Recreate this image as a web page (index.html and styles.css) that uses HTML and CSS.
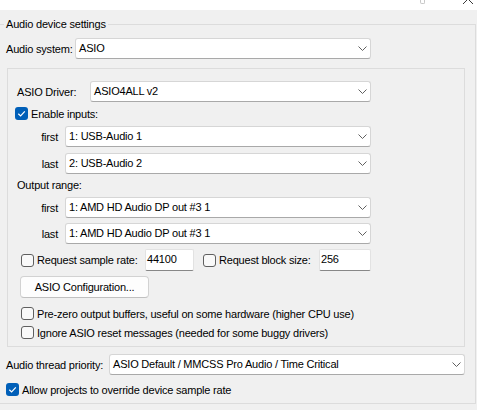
FILE: index.html
```html
<!DOCTYPE html>
<html>
<head>
<meta charset="utf-8">
<link rel="stylesheet" href="styles.css">
</head>
<body>
<div class="titlebar">
  <span class="tb-restore"></span>
  <svg class="tb-close" width="12" height="4" viewBox="0 0 12 4"><path d="M0.5 4.5 L6 -1 M11.5 4.5 L6 -1" stroke="#3a3a3a" fill="none" stroke-width="1"/></svg>
</div>
<div class="group outer">
  <div class="legend"><span>Audio device settings</span></div>
  <div class="row r-combo r-system">
    <span class="lbl lbl-system">Audio system:</span>
    <div class="combo w-system"><span>ASIO</span><svg class="chev" width="9" height="5" viewBox="0 0 9 5"><path d="M0.5 0.5 L4.5 4.5 L8.5 0.5" stroke="#606060" fill="none"/></svg></div>
  </div>
  <div class="group inner">
    <div class="row r-combo r-driver">
      <span class="lbl lbl-driver">ASIO Driver:</span>
      <div class="combo w-driver"><span>ASIO4ALL v2</span><svg class="chev" width="9" height="5" viewBox="0 0 9 5"><path d="M0.5 0.5 L4.5 4.5 L8.5 0.5" stroke="#606060" fill="none"/></svg></div>
    </div>
    <div class="row r-check r-enable">
      <span class="chk on"><svg width="13" height="13" viewBox="0 0 13 13"><path d="M3.3 6.8 L5.6 9 L9.8 4.3" stroke="#fff" fill="none" stroke-width="1.2"/></svg></span>
      <span>Enable inputs:</span>
    </div>
    <div class="row r-combo r-first">
      <span class="lbl lbl-io">first</span>
      <div class="combo w-io"><span>1: USB-Audio 1</span><svg class="chev" width="9" height="5" viewBox="0 0 9 5"><path d="M0.5 0.5 L4.5 4.5 L8.5 0.5" stroke="#606060" fill="none"/></svg></div>
    </div>
    <div class="row r-combo r-last">
      <span class="lbl lbl-io">last</span>
      <div class="combo w-io"><span>2: USB-Audio 2</span><svg class="chev" width="9" height="5" viewBox="0 0 9 5"><path d="M0.5 0.5 L4.5 4.5 L8.5 0.5" stroke="#606060" fill="none"/></svg></div>
    </div>
    <div class="row r-outhead">Output range:</div>
    <div class="row r-combo r-ofirst">
      <span class="lbl lbl-io">first</span>
      <div class="combo w-io"><span>1: AMD HD Audio DP out #3 1</span><svg class="chev" width="9" height="5" viewBox="0 0 9 5"><path d="M0.5 0.5 L4.5 4.5 L8.5 0.5" stroke="#606060" fill="none"/></svg></div>
    </div>
    <div class="row r-combo r-olast">
      <span class="lbl lbl-io">last</span>
      <div class="combo w-io"><span>1: AMD HD Audio DP out #3 1</span><svg class="chev" width="9" height="5" viewBox="0 0 9 5"><path d="M0.5 0.5 L4.5 4.5 L8.5 0.5" stroke="#606060" fill="none"/></svg></div>
    </div>
    <div class="row r-request">
      <div class="grp grp-rate"><span class="chk off"></span><span>Request sample rate:</span></div>
      <div class="tinput w-rate">44100</div>
      <div class="grp grp-block"><span class="chk off"></span><span>Request block size:</span></div>
      <div class="tinput w-block">256</div>
    </div>
    <div class="btn">ASIO Configuration...</div>
    <div class="row r-check r-prezero">
      <span class="chk off"></span>
      <span>Pre-zero output buffers, useful on some hardware (higher CPU use)</span>
    </div>
    <div class="row r-check r-ignore">
      <span class="chk off"></span>
      <span>Ignore ASIO reset messages (needed for some buggy drivers)</span>
    </div>
  </div>
  <div class="row r-combo r-thread">
    <span class="lbl lbl-thread">Audio thread priority:</span>
    <div class="combo w-thread"><span>ASIO Default / MMCSS Pro Audio / Time Critical</span><svg class="chev" width="9" height="5" viewBox="0 0 9 5"><path d="M0.5 0.5 L4.5 4.5 L8.5 0.5" stroke="#606060" fill="none"/></svg></div>
  </div>
  <div class="row r-check r-allow">
    <span class="chk on"><svg width="13" height="13" viewBox="0 0 13 13"><path d="M3.3 6.8 L5.6 9 L9.8 4.3" stroke="#fff" fill="none" stroke-width="1.2"/></svg></span>
    <span>Allow projects to override device sample rate</span>
  </div>
</div>
</body>
</html>
```
FILE: styles.css
```css
html, body {
  margin: 0;
  padding: 0;
}
body {
  background: #f0f0f0;
  font-family: "Liberation Sans", Arial, sans-serif;
  font-size: 11px;
  letter-spacing: -0.2px;
  color: #000;
  width: 477px;
  height: 410px;
  overflow: hidden;
}
.titlebar {
  height: 10px;
  background: #fff;
  display: flex;
  justify-content: flex-end;
  align-items: flex-start;
  padding-right: 3px;
}
.tb-restore {
  width: 5px;
  height: 4px;
  box-sizing: border-box;
  border: 1px solid #c8c8c8;
  border-top: 0;
  border-radius: 0 0 2px 2px;
  margin-right: 37px;
}
.tb-close {
  display: block;
}
.group {
  border: 1px solid #dcdcdc;
  box-sizing: border-box;
}
.outer {
  margin: 14px 0 0 -1px;
  width: 477px;
  height: 380px;
  padding-left: 6px;
}
.legend {
  height: 0;
  display: flex;
  align-items: flex-start;
}
.legend span {
  margin-top: -8px;
  margin-left: -2px;
  height: 15px;
  line-height: 15px;
  padding: 0 2px;
  background: #f0f0f0;
}
.row {
  display: flex;
  align-items: center;
}
.r-combo {
  height: 21px;
}
.lbl {
  flex: none;
  white-space: nowrap;
}
.combo {
  height: 21px;
  box-sizing: border-box;
  background: #fff;
  border: 1px solid #d6d6d6;
  border-bottom-color: #a9a9a9;
  border-radius: 3px;
  display: flex;
  align-items: center;
  justify-content: space-between;
  padding: 0 3px 1px 3px;
  white-space: nowrap;
}
.chev {
  display: block;
  flex: none;
  margin-top: 1px;
}
.r-system { margin-top: 13px; }
.lbl-system { width: 69px; }
.w-system { width: 296px; }

.inner {
  margin: 9px 0 0 1px;
  width: 458px;
  height: 279px;
  padding-left: 9px;
}
.r-driver { margin-top: 12px; }
.lbl-driver { width: 73px; }
.w-driver { width: 281px; }

.r-check {
  height: 13px;
  white-space: nowrap;
}
.chk {
  flex: none;
  width: 13px;
  height: 13px;
  box-sizing: border-box;
  border-radius: 3px;
  margin-right: 3px;
  display: block;
}
.chk svg { display: block; }
.chk.on { background: #005fb8; }
.chk.off {
  border: 1px solid #5f5f5f;
  background: #f9f9f9;
}
.r-enable { margin-top: 5px; margin-left: -2px; }

.lbl-io {
  width: 48px;
  text-align: right;
  padding-right: 7px;
  box-sizing: border-box;
}
.w-io { width: 306px; }
.r-first { margin-top: 6px; }
.r-last { margin-top: 6px; }
.r-outhead {
  margin-top: 4px;
  height: 14px;
}
.r-ofirst { margin-top: 5px; }
.r-olast { margin-top: 5px; }

.r-request {
  margin-top: 5px;
  margin-left: 4px;
  height: 22px;
  white-space: nowrap;
}
.grp {
  display: flex;
  align-items: center;
  flex: none;
}
.grp-rate { width: 124px; }
.grp-block { width: 116px; }
.tinput {
  flex: none;
  height: 22px;
  box-sizing: border-box;
  background: #fff;
  border: 1px solid #e2e2e2;
  border-bottom-color: #878787;
  border-radius: 2px;
  padding: 0 0 3px 1px;
  display: flex;
  align-items: center;
}
.w-rate { width: 49px; margin-right: 9px; }
.w-block { width: 52px; }

.btn {
  margin: 5px 0 0 3px;
  width: 129px;
  height: 22px;
  box-sizing: border-box;
  background: #fdfdfd;
  border: 1px solid #d2d2d2;
  border-bottom-color: #c0c0c0;
  border-radius: 4px;
  display: flex;
  align-items: center;
  justify-content: center;
  padding-bottom: 1px;
}
.r-prezero { margin-top: 9px; margin-left: 4px; }
.r-ignore { margin-top: 6px; margin-left: 4px; }

.r-thread { margin-top: 7px; }
.lbl-thread { width: 103px; }
.w-thread { width: 356px; }
.r-allow { margin-top: 8px; }
```
